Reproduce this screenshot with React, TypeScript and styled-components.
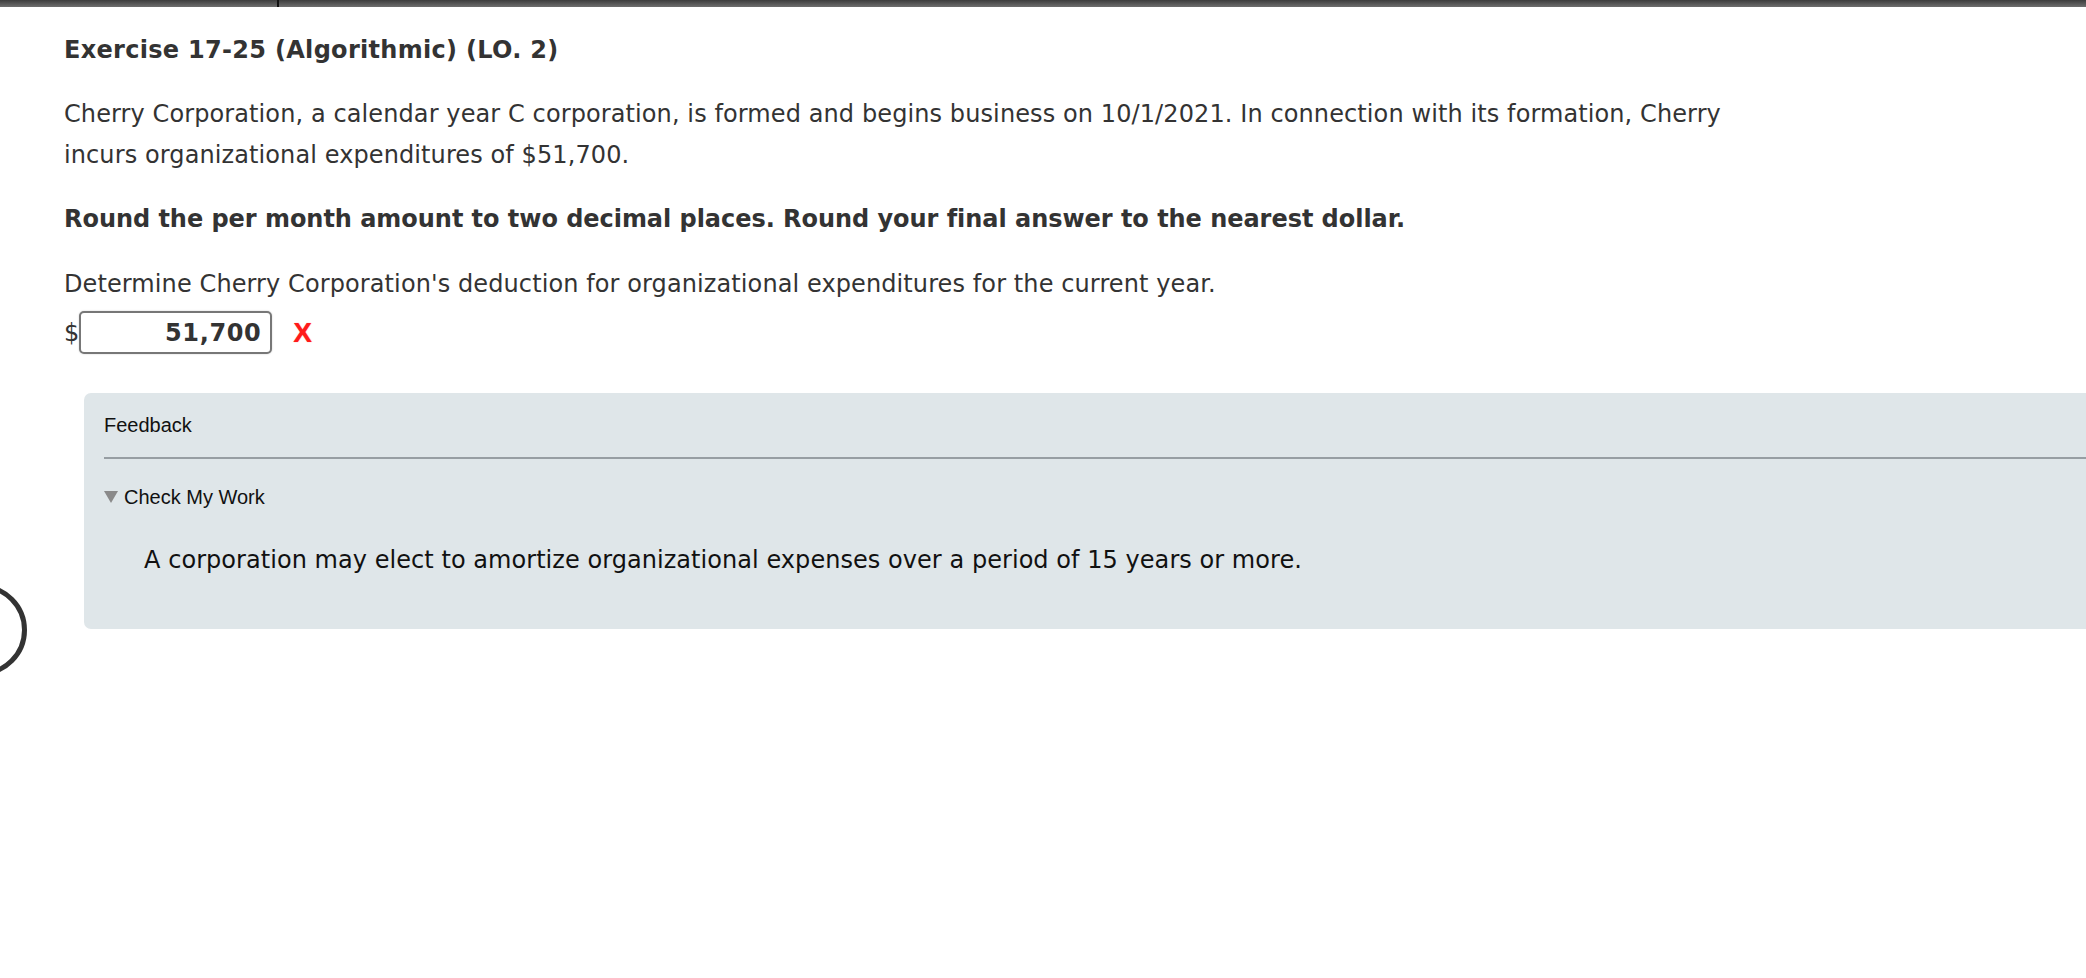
import React from "react";
import styled, { createGlobalStyle } from "styled-components";

const Global = createGlobalStyle`
  html, body { margin: 0; padding: 0; background: #fff; overflow: hidden; }
  body { font-family: "DejaVu Sans", Verdana, sans-serif; color: #333; }
`;

const Page = styled.div`
  position: relative;
  width: 2086px;
  height: 978px;
  overflow: hidden;
`;

const TopBar = styled.div`
  position: relative;
  height: 7px;
  background: linear-gradient(#3c3c3c, #6e6e6e);
`;

const Tick = styled.span`
  position: absolute;
  left: 277px;
  top: 0;
  width: 2px;
  height: 7px;
  background: #111;
`;

const Content = styled.div`
  padding-left: 64px;
`;

const Title = styled.h1`
  margin: 29px 0 0;
  font-size: 24px;
  line-height: 28px;
  letter-spacing: 0.3px;
  font-weight: bold;
  color: #333;
`;

const Para = styled.p<{ $bold?: boolean; $mt: number }>`
  margin: ${(p) => p.$mt}px 0 0;
  font-size: 24px;
  line-height: 41px;
  letter-spacing: ${(p) => (p.$bold ? "-0.04px" : "0.1px")};
  font-weight: ${(p) => (p.$bold ? "bold" : "normal")};
  color: #333;
  max-width: 1690px;
`;

const AnswerRow = styled.div`
  display: flex;
  align-items: center;
  margin-top: 6px;
  height: 43px;
`;

const Dollar = styled.span`
  font-size: 24px;
  color: #333;
`;

const AnswerBox = styled.div`
  box-sizing: border-box;
  width: 193px;
  height: 43px;
  border: 2px solid #777;
  border-radius: 5px;
  box-shadow: 0 0 2px rgba(0, 0, 0, 0.2);
  display: flex;
  align-items: center;
  justify-content: flex-end;
  padding-right: 9px;
  font-size: 24px;
  letter-spacing: 0.6px;
  font-weight: bold;
  color: #333;
  background: #fff;
`;

const WrongMark = styled.span`
  margin-left: 21px;
  font-family: "Liberation Sans", Arial, sans-serif;
  font-weight: bold;
  font-size: 28px;
  color: #ff1a1a;
  line-height: 1;
  text-shadow: 0 0 1px rgba(255, 0, 0, 0.6);
`;

const Panel = styled.section`
  margin: 39px 0 0 20px;
  width: 2100px;
  box-sizing: border-box;
  background: #dfe6e9;
  border-radius: 7px;
  padding: 0 0 54px 20px;
`;

const PanelHeader = styled.div`
  height: 64px;
  display: flex;
  align-items: center;
  border-bottom: 2px solid #979ea3;
  font-family: "Liberation Sans", Arial, sans-serif;
  font-size: 20px;
  color: #111;
`;

const Toggle = styled.div`
  margin-top: 26px;
  display: flex;
  align-items: center;
  gap: 6px;
  font-family: "Liberation Sans", Arial, sans-serif;
  font-size: 20px;
  line-height: 24px;
  color: #111;
`;

const FeedbackText = styled.p`
  margin: 36px 0 0 40px;
  font-size: 24px;
  line-height: 30px;
  letter-spacing: 0.05px;
  color: #111;
`;

const Ring = styled.div`
  position: absolute;
  left: -65px;
  top: 584px;
  width: 92px;
  height: 92px;
  box-sizing: border-box;
  border: 5px solid #333;
  border-radius: 50%;
`;

export default function App() {
  return (
    <Page>
      <Global />
      <TopBar>
        <Tick />
      </TopBar>
      <Content>
        <Title>Exercise 17-25 (Algorithmic) (LO. 2)</Title>
        <Para $mt={30}>
          Cherry Corporation, a calendar year C corporation, is formed and begins business on 10/1/2021. In connection with its formation, Cherry
          incurs organizational expenditures of $51,700.
        </Para>
        <Para $mt={23} $bold>
          Round the per month amount to two decimal places. Round your final answer to the nearest dollar.
        </Para>
        <Para $mt={24}>
          Determine Cherry Corporation's deduction for organizational expenditures for the current year.
        </Para>
        <AnswerRow>
          <Dollar>$</Dollar>
          <AnswerBox>51,700</AnswerBox>
          <WrongMark>X</WrongMark>
        </AnswerRow>
        <Panel>
          <PanelHeader>Feedback</PanelHeader>
          <Toggle>
            <svg width="14" height="12" viewBox="0 0 14 12">
              <polygon points="0,0 14,0 7,12" fill="#8a8a8a" />
            </svg>
            Check My Work
          </Toggle>
          <FeedbackText>
            A corporation may elect to amortize organizational expenses over a period of 15 years or more.
          </FeedbackText>
        </Panel>
      </Content>
      <Ring />
    </Page>
  );
}
